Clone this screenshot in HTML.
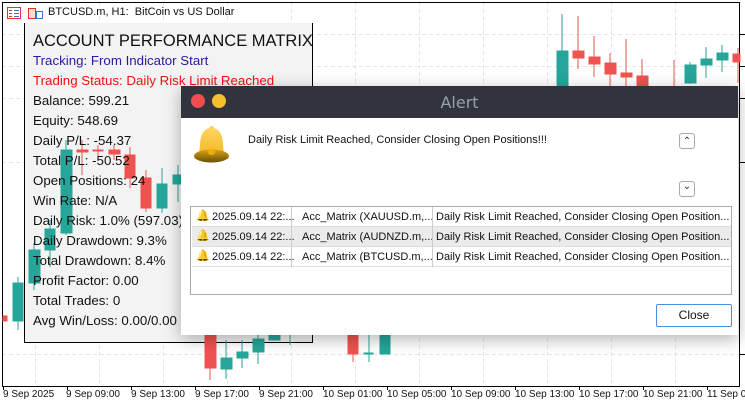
<!DOCTYPE html>
<html><head><meta charset="utf-8"><style>
*{margin:0;padding:0;box-sizing:border-box}
body{width:745px;height:402px;background:#fff;position:relative;overflow:hidden;font-family:"Liberation Sans",sans-serif}
.abs{position:absolute}
#panel{left:24px;top:23px;width:289px;height:320px;background:#f3f3f3;border:1px solid #000;border-top:none}
.pt{position:absolute;left:33px;font-size:13.3px;color:#111;white-space:nowrap}
#dlg{left:181px;top:86px;width:557px;height:249px;background:#fff;box-shadow:0 4px 16px rgba(0,0,0,.3)}
#tb{height:32px;background:#31343d;position:relative}
.dot{position:absolute;top:8px;width:14px;height:14px;border-radius:50%}
.dj{font-family:"Liberation Sans",sans-serif;font-size:11px;color:#111;white-space:nowrap}
.row{position:absolute;left:1px;width:539px;height:20px;border-bottom:1px solid #ddd;overflow:hidden}
.row span{position:absolute;top:4px}
.tl{position:absolute;top:389px;font-size:10px;font-family:"Liberation Sans",sans-serif;color:#111;white-space:nowrap}
</style></head><body>
<svg class="abs" style="left:0;top:0" width="745" height="402">
<g stroke="#e6e6e6" stroke-dasharray="4,3" stroke-width="1">
<line x1="2" y1="34.5" x2="740" y2="34.5"/><line x1="2" y1="66.5" x2="740" y2="66.5"/><line x1="2" y1="162.5" x2="740" y2="162.5"/><line x1="2" y1="354.5" x2="740" y2="354.5"/><line x1="2" y1="98.5" x2="740" y2="98.5"/>
<line x1="35.5" y1="2" x2="35.5" y2="386"/><line x1="99.5" y1="2" x2="99.5" y2="386"/><line x1="163.5" y1="2" x2="163.5" y2="386"/><line x1="227.5" y1="2" x2="227.5" y2="386"/><line x1="291.5" y1="2" x2="291.5" y2="386"/><line x1="355.5" y1="2" x2="355.5" y2="386"/><line x1="419.5" y1="2" x2="419.5" y2="386"/><line x1="483.5" y1="2" x2="483.5" y2="386"/><line x1="547.5" y1="2" x2="547.5" y2="386"/><line x1="611.5" y1="2" x2="611.5" y2="386"/><line x1="675.5" y1="2" x2="675.5" y2="386"/>
</g>
<rect x="2.5" y="2.5" width="737" height="384" fill="none" stroke="#000"/>
<g stroke="#000"><line x1="740" y1="34.5" x2="745" y2="34.5"/><line x1="740" y1="66.5" x2="745" y2="66.5"/><line x1="740" y1="98.5" x2="745" y2="98.5"/><line x1="740" y1="162.5" x2="745" y2="162.5"/><line x1="740" y1="354.5" x2="745" y2="354.5"/>
<line x1="3.5" y1="386" x2="3.5" y2="390"/><line x1="67.5" y1="386" x2="67.5" y2="390"/><line x1="131.5" y1="386" x2="131.5" y2="390"/><line x1="195.5" y1="386" x2="195.5" y2="390"/><line x1="259.5" y1="386" x2="259.5" y2="390"/><line x1="323.5" y1="386" x2="323.5" y2="390"/><line x1="387.5" y1="386" x2="387.5" y2="390"/><line x1="451.5" y1="386" x2="451.5" y2="390"/><line x1="515.5" y1="386" x2="515.5" y2="390"/><line x1="579.5" y1="386" x2="579.5" y2="390"/><line x1="643.5" y1="386" x2="643.5" y2="390"/><line x1="707.5" y1="386" x2="707.5" y2="390"/></g>
<rect x="7.5" y="7.5" width="13" height="11" fill="#fff" stroke="#d33"/><g stroke="#d33"><line x1="9" y1="10.5" x2="12" y2="10.5"/><line x1="9" y1="13.5" x2="12" y2="13.5"/><line x1="9" y1="16.5" x2="12" y2="16.5"/></g><g stroke="#37c"><line x1="14" y1="10.5" x2="19" y2="10.5"/><line x1="14" y1="13.5" x2="19" y2="13.5"/><line x1="14" y1="16.5" x2="19" y2="16.5"/></g>
<rect x="28.5" y="8.5" width="7" height="10" fill="#fdd" stroke="#d33"/><rect x="36.5" y="11.5" width="6" height="7" fill="#fff" stroke="#37c"/>
</svg>
<div class="abs" style="left:48px;top:6px;font-size:11px;color:#111">BTCUSD.m, H1:&nbsp; BitCoin vs US Dollar</div>
<div id="panel" class="abs"></div>
<svg class="abs" style="left:0;top:0" width="745" height="402">
<g fill="#26a69a" stroke="#26a69a">
<line x1="18" y1="277" x2="18" y2="330"/><rect x="13" y="283" width="10" height="38"/>
<line x1="34" y1="243" x2="34" y2="290"/><rect x="29" y="250" width="11" height="33"/>
<line x1="50" y1="220" x2="50" y2="267"/><rect x="45" y="229" width="10" height="21"/>
<line x1="66" y1="140" x2="66" y2="235"/><rect x="61" y="150" width="11" height="83"/>
<line x1="162" y1="168" x2="162" y2="213"/><rect x="157" y="184" width="10" height="24"/>
<line x1="178" y1="165" x2="178" y2="202"/><rect x="173" y="175" width="10" height="9"/>
<line x1="226" y1="340" x2="226" y2="379"/><rect x="221" y="358" width="11" height="11"/>
<line x1="242" y1="340" x2="242" y2="368"/><rect x="237" y="352" width="11" height="6"/>
<line x1="258" y1="330" x2="258" y2="364"/><rect x="253" y="339" width="11" height="13"/>
<line x1="274" y1="320" x2="274" y2="340"/><rect x="269" y="332" width="11" height="8"/>
<line x1="290" y1="325" x2="290" y2="345"/>
<line x1="369" y1="330" x2="369" y2="362"/><rect x="364" y="353" width="9" height="1"/>
<rect x="380" y="330" width="10" height="24"/>
<line x1="562" y1="14" x2="562" y2="90"/><rect x="557" y="51" width="11" height="40"/>
<line x1="690" y1="62" x2="690" y2="84"/><rect x="685" y="65" width="11" height="18"/>
<line x1="706" y1="47" x2="706" y2="78"/><rect x="701" y="59" width="11" height="6"/>
<line x1="722" y1="45" x2="722" y2="72"/><rect x="717" y="53" width="11" height="7"/>
</g>
<g fill="#ef5350" stroke="#ef5350">
<rect x="3" y="316" width="4" height="5"/>
<line x1="82" y1="140" x2="82" y2="175"/><rect x="77" y="150" width="11" height="2"/>
<line x1="98" y1="145" x2="98" y2="160"/><rect x="93" y="150" width="10" height="1"/>
<line x1="114" y1="145" x2="114" y2="160"/><rect x="109" y="150" width="11" height="4"/>
<line x1="130" y1="147" x2="130" y2="188"/><rect x="125" y="155" width="10" height="23"/>
<line x1="146" y1="170" x2="146" y2="212"/><rect x="141" y="178" width="10" height="30"/>
<line x1="210" y1="320" x2="210" y2="380"/><rect x="205" y="328" width="11" height="40"/>
<line x1="353" y1="330" x2="353" y2="362"/><rect x="348" y="330" width="10" height="24"/>
<line x1="578" y1="16" x2="578" y2="69"/><rect x="573" y="51" width="11" height="7"/>
<line x1="594" y1="36" x2="594" y2="77"/><rect x="589" y="57" width="11" height="7"/>
<line x1="610" y1="53" x2="610" y2="86"/><rect x="605" y="63" width="11" height="11"/>
<line x1="626" y1="39" x2="626" y2="86"/><rect x="621" y="73" width="11" height="4"/>
<line x1="642" y1="59" x2="642" y2="86"/><rect x="637" y="76" width="11" height="10"/>
<line x1="674" y1="60" x2="674" y2="86"/>
<line x1="738" y1="48" x2="738" y2="83"/><rect x="733" y="54" width="7" height="8"/>
</g>
</svg>
<div class="pt" style="top:32px;font-size:16.5px">ACCOUNT PERFORMANCE MATRIX</div>
<div class="pt" style="top:53px;color:#2a1aa0">Tracking: From Indicator Start</div>
<div class="pt" style="top:73px;color:#f01010">Trading Status: Daily Risk Limit Reached</div>
<div class="pt" style="top:93px">Balance: 599.21</div>
<div class="pt" style="top:113px">Equity: 548.69</div>
<div class="pt" style="top:133px">Daily P/L: -54.37</div>
<div class="pt" style="top:153px">Total P/L: -50.52</div>
<div class="pt" style="top:173px">Open Positions: 24</div>
<div class="pt" style="top:193px">Win Rate: N/A</div>
<div class="pt" style="top:213px">Daily Risk: 1.0% (597.03)</div>
<div class="pt" style="top:233px">Daily Drawdown: 9.3%</div>
<div class="pt" style="top:253px">Total Drawdown: 8.4%</div>
<div class="pt" style="top:273px">Profit Factor: 0.00</div>
<div class="pt" style="top:293px">Total Trades: 0</div>
<div class="pt" style="top:313px">Avg Win/Loss: 0.00/0.00</div>

<div class="tl" style="left:3px">9 Sep 2025</div><div class="tl" style="left:66px">9 Sep 09:00</div><div class="tl" style="left:131px">9 Sep 13:00</div><div class="tl" style="left:195px">9 Sep 17:00</div><div class="tl" style="left:259px">9 Sep 21:00</div><div class="tl" style="left:323px">10 Sep 01:00</div><div class="tl" style="left:387px">10 Sep 05:00</div><div class="tl" style="left:451px">10 Sep 09:00</div><div class="tl" style="left:515px">10 Sep 13:00</div><div class="tl" style="left:579px">10 Sep 17:00</div><div class="tl" style="left:643px">10 Sep 21:00</div><div class="tl" style="left:707px">11 Sep 01:00</div>

<div id="dlg" class="abs">
<div id="tb"><div class="dot" style="left:10px;background:#ee4d52"></div><div class="dot" style="left:31px;background:#f5c02c"></div>
<div style="position:absolute;left:0;right:0;top:7px;text-align:center;color:#9aa0a8;font-size:16px;font-family:'DejaVu Sans',sans-serif">Alert</div></div>
<svg style="position:absolute;left:12px;top:39px" width="40" height="40">
<defs><linearGradient id="g1" x1="0" y1="0" x2="0" y2="1"><stop offset="0" stop-color="#ffd766"/><stop offset="1" stop-color="#f2b31c"/></linearGradient>
<linearGradient id="g2" x1="0" y1="0" x2="0" y2="1"><stop offset="0" stop-color="#d8a21a"/><stop offset="1" stop-color="#6a5000"/></linearGradient></defs>
<path d="M19 1 Q16 1 16 3 Q7 6 7 20 L6 30 L1 34 L36 34 L31 30 L30 20 Q30 6 21 3 Q21 1 19 1Z" fill="url(#g1)"/>
<ellipse cx="18.5" cy="31" rx="17.5" ry="6.5" fill="url(#g2)"/>
<ellipse cx="18.5" cy="27" rx="4" ry="3" fill="#e8ae0c"/>
</svg>
<div class="dj abs" style="left:67px;top:48px">Daily Risk Limit Reached, Consider Closing Open Positions!!!</div>
<div class="abs" style="left:498px;top:47px;width:16px;height:16px;border:1px solid #aaa;border-radius:3px;font-size:10px;text-align:center;line-height:16px;color:#333">&#8963;</div>
<div class="abs" style="left:498px;top:95px;width:16px;height:16px;border:1px solid #aaa;border-radius:3px;font-size:10px;text-align:center;line-height:10px;color:#333">&#8964;</div>
<div class="abs" style="left:9px;top:120px;width:542px;height:89px;border:1px solid #aaa">
<div class="row dj" style="top:0"><span style="left:4px;top:2px;color:#f2b31c">&#x1F514;</span><span style="left:20px">2025.09.14 22:...</span><span style="left:110px">Acc_Matrix (XAUUSD.m,...</span><span style="left:244px">Daily Risk Limit Reached, Consider Closing Open Position...</span></div>
<div class="row dj" style="top:20px;background:#ebebeb"><span style="left:4px;top:2px;color:#f2b31c">&#x1F514;</span><span style="left:20px">2025.09.14 22:...</span><span style="left:110px">Acc_Matrix (AUDNZD.m,...</span><span style="left:244px">Daily Risk Limit Reached, Consider Closing Open Position...</span></div>
<div class="row dj" style="top:40px"><span style="left:4px;top:2px;color:#f2b31c">&#x1F514;</span><span style="left:20px">2025.09.14 22:...</span><span style="left:110px">Acc_Matrix (BTCUSD.m,...</span><span style="left:244px">Daily Risk Limit Reached, Consider Closing Open Position...</span></div>
<div class="abs" style="left:100px;top:0;width:1px;height:60px;background:#ccc"></div>
<div class="abs" style="left:241px;top:0;width:1px;height:60px;background:#ccc"></div>
</div>
<div class="abs dj" style="left:475px;top:218px;width:76px;height:23px;border:1px solid #4a90e2;border-radius:2px;text-align:center;line-height:21px;font-size:12px">Close</div>
</div>
</body></html>
